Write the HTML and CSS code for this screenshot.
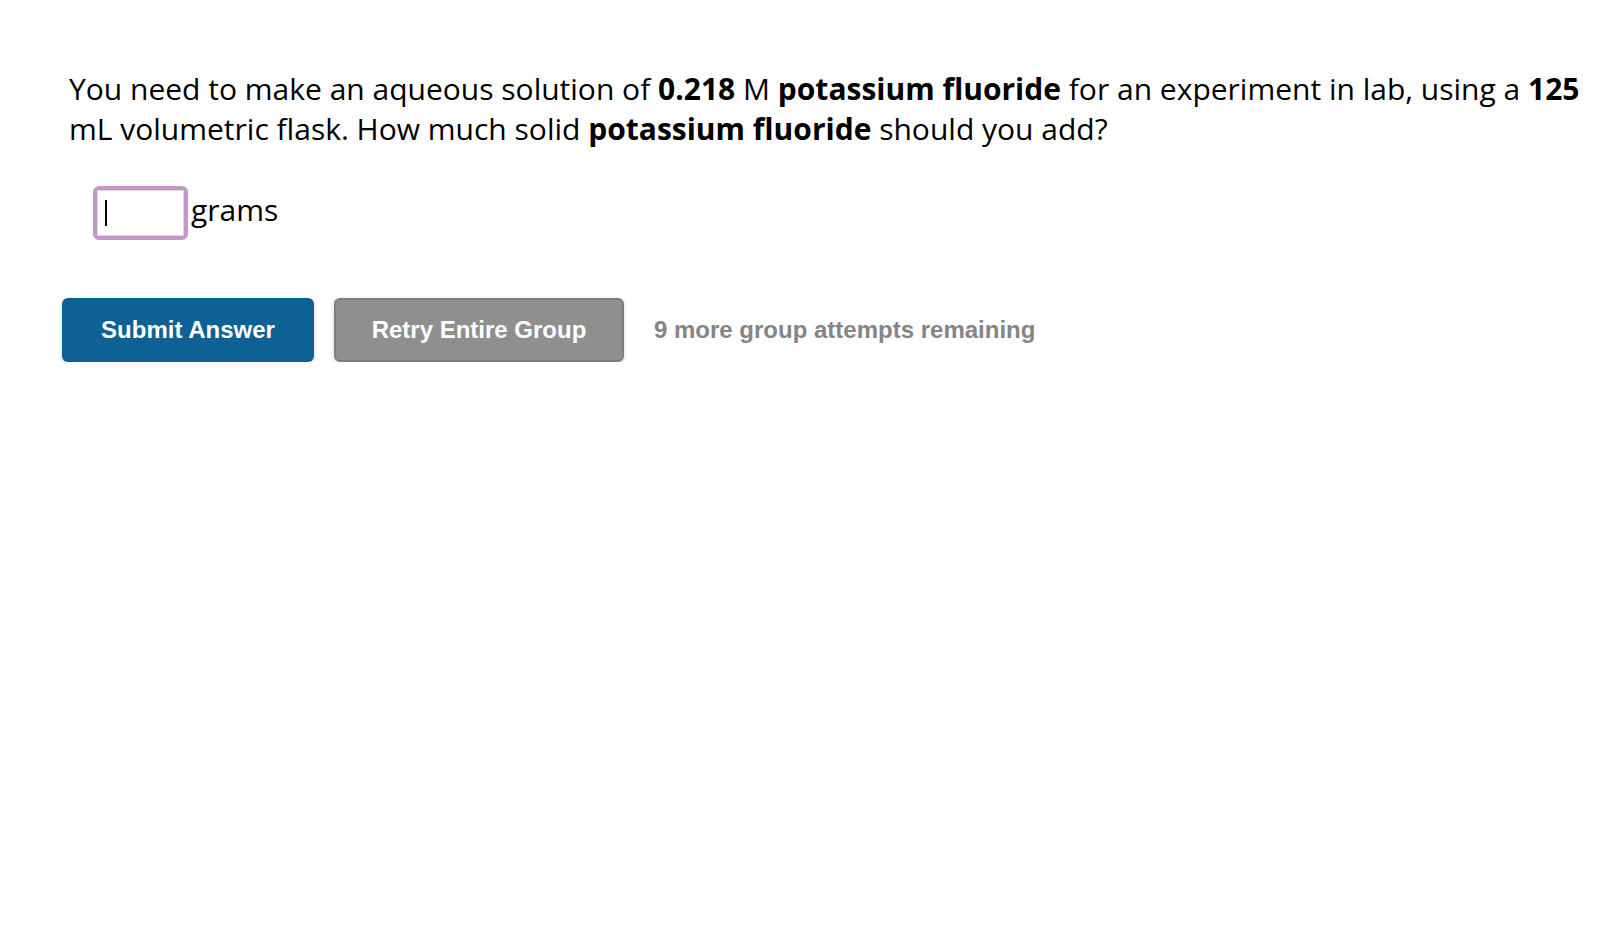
FILE: index.html
```html
<!DOCTYPE html>
<html lang="en">
<head>
<meta charset="utf-8">
<title>Question</title>
<link rel="stylesheet" href="styles.css">
</head>
<body>
<main class="question">
  <p class="prompt">You need to make an aqueous solution of <b>0.218</b> M <b>potassium fluoride</b> for an experiment in lab, using a <b>125</b> mL volumetric flask. How much solid <b>potassium fluoride</b> should you add?</p>
  <div class="answer-row">
    <span class="field"><input class="field-input" type="text" aria-label="grams"><span class="caret"></span></span>
    <span class="unit">grams</span>
  </div>
  <div class="actions">
    <button class="btn btn-primary" type="button">Submit Answer</button>
    <button class="btn btn-secondary" type="button">Retry Entire Group</button>
    <span class="attempts">9 more group attempts remaining</span>
  </div>
</main>
</body>
</html>
```

FILE: styles.css
```css
html, body {
  margin: 0;
  padding: 0;
  background: #ffffff;
}

.question {
  padding: 69px 0 0 62px;
}

.prompt {
  margin: 0 0 0 7px;
  width: 1535px;
  font-family: "Open Sans", "Liberation Sans", sans-serif;
  font-size: 30px;
  line-height: 40px;
  color: #000000;
}

.prompt b {
  font-weight: 700;
}

.answer-row {
  display: flex;
  align-items: center;
  margin: 37px 0 0 31px;
  gap: 3px;
}

.field {
  position: relative;
  display: block;
  width: 95px;
  height: 54px;
  box-sizing: border-box;
  border: 4px solid #c497c6;
  border-radius: 6px;
  background: #ffffff;
}

.field-input {
  display: block;
  width: 100%;
  height: 100%;
  box-sizing: border-box;
  border: 1px solid #d9d9d9;
  margin: 0;
  padding: 0;
  background: #ffffff;
  outline: none;
  font-family: "Open Sans", sans-serif;
  font-size: 24px;
}

.caret {
  position: absolute;
  left: 8px;
  top: 10px;
  width: 2px;
  height: 26px;
  background: #000000;
}

.unit {
  margin-bottom: 6px;
  font-family: "Open Sans", "Liberation Sans", sans-serif;
  font-size: 30px;
  line-height: 40px;
  color: #000000;
}

.actions {
  display: flex;
  align-items: center;
  margin-top: 58px;
  gap: 20px;
}

.btn {
  height: 64px;
  box-sizing: border-box;
  border-radius: 6px;
  font-family: "Liberation Sans", Arial, sans-serif;
  font-weight: 700;
  font-size: 24px;
  color: #ffffff;
  cursor: pointer;
  box-shadow: 0 1px 4px rgba(0, 0, 0, 0.18);
}

.btn-primary {
  width: 252px;
  border: none;
  background: #0e6194;
}

.btn-secondary {
  width: 290px;
  border: 2px solid #7e7e7e;
  background: #8f8f8f;
}

.attempts {
  margin-left: 10px;
  font-family: "Liberation Sans", Arial, sans-serif;
  font-weight: 700;
  font-size: 24px;
  color: #858585;
}
```
